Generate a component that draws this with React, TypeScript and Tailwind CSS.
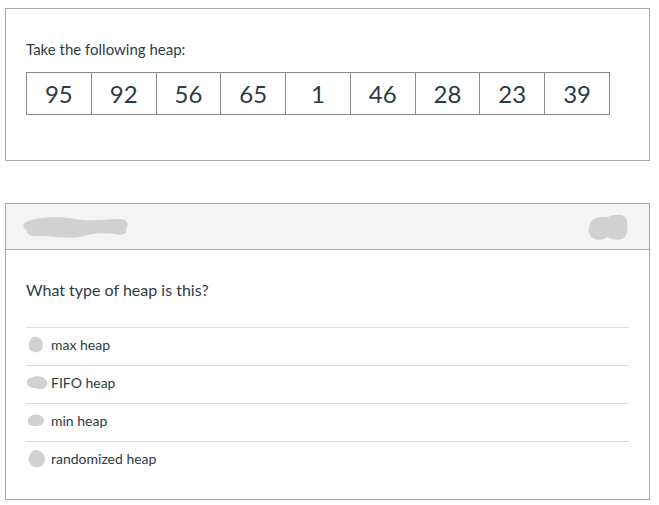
const heap = [95, 92, 56, 65, 1, 46, 28, 23, 39];

const options = [
  { label: "max heap", blob: "M7 2 C13 1 17 5 17 10 C17 16 12 18 8 17 C3 16 2 12 3 8 C4 5 5 3 7 2 Z" },
  { label: "FIFO heap", blob: "M4 5 C9 2 18 3 21 8 C23 13 18 17 13 16 C9 15 3 15 1 11 C0 8 2 6 4 5 Z" },
  { label: "min heap", blob: "M5 5 C10 2 17 4 18 9 C19 14 12 15 8 15 C3 15 1 12 2 9 C2 7 3 6 5 5 Z" },
  { label: "randomized heap", blob: "M9 1 C15 1 19 5 19 10 C19 16 14 19 9 18 C4 17 2 13 3 8 C4 4 6 2 9 1 Z" },
];

export default function App() {
  return (
    <div className="w-[659px] h-[505px] bg-white pt-[8px] pl-[5px] text-[#2d3b45] font-['Lato','Open_Sans',sans-serif]">
      {/* Question stem */}
      <div className="w-[645px] h-[153px] border border-[#aaaaaa] pt-[29px] px-[20px]">
        <p className="text-[15px] leading-[22px]">Take the following heap:</p>
        <table className="mt-[12px] w-[584px] table-fixed border-collapse">
          <tbody>
            <tr>
              {heap.map((n, i) => (
                <td
                  key={i}
                  className="h-[42px] border border-[#888888] text-center text-[24px] leading-none"
                >
                  {n}
                </td>
              ))}
            </tr>
          </tbody>
        </table>
      </div>

      {/* Answer card */}
      <div className="mt-[42px] w-[645px] h-[297px] border border-[#aaaaaa]">
        <div className="h-[46px] bg-[#f4f4f4] border-b border-[#aaaaaa] flex items-center justify-between pl-[14px] pr-[17px]">
          <svg width="110" height="28" viewBox="0 0 110 28">
            <path
              d="M8 8 C20 4 40 3 55 6 C70 9 85 6 100 6 C108 6 109 12 106 16 C108 21 102 23 95 21 C80 19 70 21 60 24 C45 26 30 23 20 23 C10 24 6 21 7 17 C2 15 2 10 8 8 Z"
              fill="#d0d1d3"
            />
          </svg>
          <svg width="46" height="30" viewBox="0 0 46 30">
            <path
              d="M4 12 C6 6 14 4 22 5 C28 2 38 2 40 6 C42 12 42 21 39 25 C36 29 26 28 21 25 C18 28 11 29 7 26 C2 23 2 17 4 12 Z"
              fill="#d0d1d3"
            />
          </svg>
        </div>

        <div className="pt-[28px] px-[20px]">
          <p className="text-[16px] leading-[24px]">What type of heap is this?</p>
          <div className="mt-[25px] w-[603px]">
            {options.map((o) => (
              <div
                key={o.label}
                className="h-[38px] border-t border-[#dddddd] flex items-center pb-[4px]"
              >
                <svg width="25" height="20" viewBox="0 0 25 20" className="shrink-0">
                  <path d={o.blob} fill="#d0d1d3" />
                </svg>
                <span className="text-[14px] leading-none">{o.label}</span>
              </div>
            ))}
          </div>
        </div>
      </div>
    </div>
  );
}
